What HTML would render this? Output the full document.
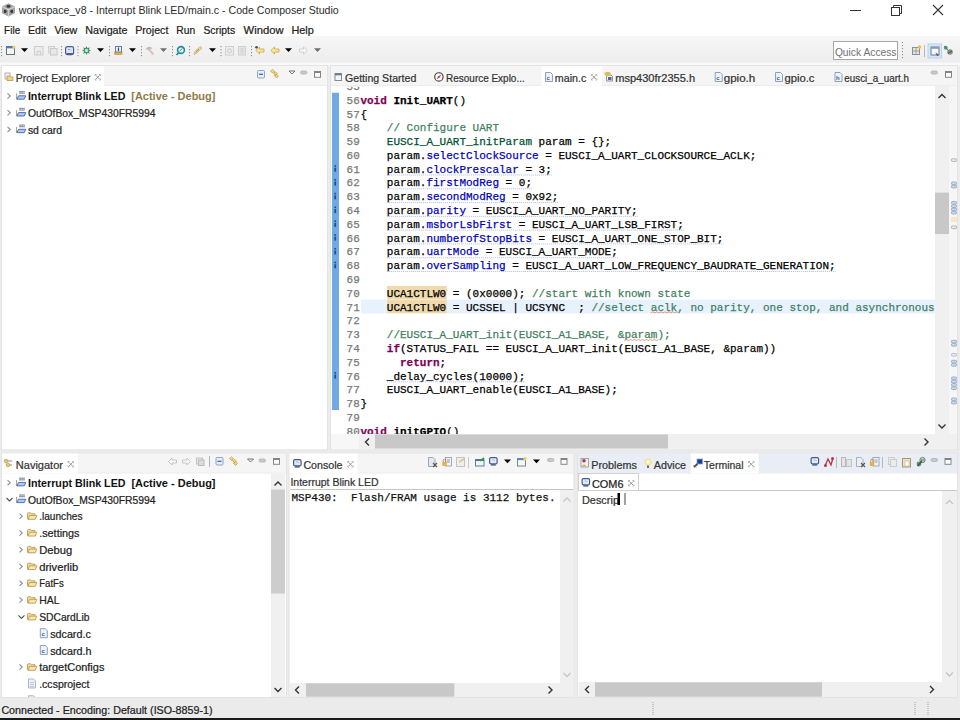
<!DOCTYPE html>
<html><head><meta charset="utf-8"><style>
html,body{margin:0;padding:0;width:960px;height:720px;overflow:hidden;background:#ebebeb}
svg{display:block}
text{white-space:pre}
</style></head><body>
<svg width="960" height="720" viewBox="0 0 960 720" font-family="Liberation Sans, sans-serif">
<rect x="0" y="0" width="960" height="720" fill="#ececec" />
<rect x="0" y="0" width="960" height="36" fill="#ffffff" />
<defs><linearGradient id="tb" x1="0" y1="0" x2="0" y2="1"><stop offset="0" stop-color="#f6f6f6"/><stop offset="1" stop-color="#ededed"/></linearGradient></defs>
<rect x="0" y="36" width="960" height="26" fill="url(#tb)" />
<rect x="0" y="62.5" width="960" height="3.5" fill="#f9f9f9" />
<g transform="translate(2,3)"><path d="M6.5 0.3 L13 3.5 L13 10.3 L6.5 13.6 L0 10.3 L0 3.5 Z" fill="#a4a4a4"/><path d="M0 3.5 L6.5 6.8 L13 3.5 M6.5 6.8 V13.6" fill="none" stroke="#d2d2d2" stroke-width="1.1"/><ellipse cx="6.5" cy="3.4" rx="2" ry="1.3" fill="#3a3a3a"/><ellipse cx="3.2" cy="8.4" rx="1.4" ry="1.8" fill="#3a3a3a"/><ellipse cx="9.8" cy="8.4" rx="1.4" ry="1.8" fill="#3a3a3a"/></g>
<text x="18.75" y="14" font-size="10.6" fill="#2b2b2b" textLength="320" lengthAdjust="spacingAndGlyphs" font-family='"Liberation Sans",sans-serif' >workspace_v8 - Interrupt Blink LED/main.c - Code Composer Studio</text>
<line x1="850" y1="10.5" x2="861" y2="10.5" stroke="#333" stroke-width="1" />
<rect x="891.5" y="7.5" width="8" height="8" fill="none" stroke="#333" stroke-width="1" />
<path d="M893.5 7.5 V5.5 H901.5 V13.5 H899.5" fill="none" stroke="#333" stroke-width="1"/>
<path d="M933 5 L943 15 M943 5 L933 15" stroke="#333" stroke-width="1.1"/>
<text x="4.1000000000000005" y="34.1" font-size="10.6" fill="#222" textLength="16.1" lengthAdjust="spacingAndGlyphs" font-family='"Liberation Sans",sans-serif'  stroke="#222" stroke-width="0.22">File</text>
<text x="28.099999999999998" y="34.1" font-size="10.6" fill="#222" textLength="18.1" lengthAdjust="spacingAndGlyphs" font-family='"Liberation Sans",sans-serif'  stroke="#222" stroke-width="0.22">Edit</text>
<text x="54.4" y="34.1" font-size="10.6" fill="#222" textLength="22.8" lengthAdjust="spacingAndGlyphs" font-family='"Liberation Sans",sans-serif'  stroke="#222" stroke-width="0.22">View</text>
<text x="85.2" y="34.1" font-size="10.6" fill="#222" textLength="42.300000000000004" lengthAdjust="spacingAndGlyphs" font-family='"Liberation Sans",sans-serif'  stroke="#222" stroke-width="0.22">Navigate</text>
<text x="135.20000000000002" y="34.1" font-size="10.6" fill="#222" textLength="33.2" lengthAdjust="spacingAndGlyphs" font-family='"Liberation Sans",sans-serif'  stroke="#222" stroke-width="0.22">Project</text>
<text x="176.3" y="34.1" font-size="10.6" fill="#222" textLength="18.8" lengthAdjust="spacingAndGlyphs" font-family='"Liberation Sans",sans-serif'  stroke="#222" stroke-width="0.22">Run</text>
<text x="203.4" y="34.1" font-size="10.6" fill="#222" textLength="31.700000000000003" lengthAdjust="spacingAndGlyphs" font-family='"Liberation Sans",sans-serif'  stroke="#222" stroke-width="0.22">Scripts</text>
<text x="243.6" y="34.1" font-size="10.6" fill="#222" textLength="40.0" lengthAdjust="spacingAndGlyphs" font-family='"Liberation Sans",sans-serif'  stroke="#222" stroke-width="0.22">Window</text>
<text x="291.4" y="34.1" font-size="10.6" fill="#222" textLength="22.400000000000002" lengthAdjust="spacingAndGlyphs" font-family='"Liberation Sans",sans-serif'  stroke="#222" stroke-width="0.22">Help</text>
<rect x="1" y="46" width="1" height="1.2" fill="#8a8a8a" />
<rect x="1" y="49" width="1" height="1.2" fill="#8a8a8a" />
<rect x="1" y="52" width="1" height="1.2" fill="#8a8a8a" />
<rect x="1" y="55" width="1" height="1.2" fill="#8a8a8a" />
<g transform="translate(6,46)"><rect x="0.5" y="0.5" width="8" height="8" fill="#f4f7ec" stroke="#6a7488"/><rect x="0.5" y="0.5" width="8" height="1.8" fill="#4f78b8"/><circle cx="8" cy="1" r="1.6" fill="#f0cf60"/></g>
<path d="M21 48.2 h7 l-3.5 3.8 z" fill="#000"/>
<g transform="translate(34,46)"><rect x="0.5" y="0.5" width="8.5" height="8.5" fill="#ececec" stroke="#cdcdcd"/><path d="M3 9 V5.5 H6.5 V9" fill="none" stroke="#cdcdcd"/></g>
<g transform="translate(48,46)"><rect x="0.5" y="0.5" width="6" height="6.5" fill="#ececec" stroke="#cfcfcf"/><rect x="2.5" y="2.5" width="6.5" height="6.5" fill="#e8e8e8" stroke="#c8c8c8"/></g>
<rect x="61" y="46" width="1" height="1.2" fill="#8a8a8a" />
<rect x="61" y="49" width="1" height="1.2" fill="#8a8a8a" />
<rect x="61" y="52" width="1" height="1.2" fill="#8a8a8a" />
<rect x="61" y="55" width="1" height="1.2" fill="#8a8a8a" />
<g transform="translate(65,46)"><rect x="0.6" y="0.6" width="8" height="8" rx="1.8" fill="#dce6f5" stroke="#4a5c9c" stroke-width="1.2"/><rect x="1.5" y="7" width="6.5" height="1.6" fill="#4a5c9c"/><path d="M3 3.5 H5 L6 4.5" stroke="#7a8ab8" stroke-width="0.7" fill="none"/></g>
<rect x="77.5" y="46" width="1" height="1.2" fill="#8a8a8a" />
<rect x="77.5" y="49" width="1" height="1.2" fill="#8a8a8a" />
<rect x="77.5" y="52" width="1" height="1.2" fill="#8a8a8a" />
<rect x="77.5" y="55" width="1" height="1.2" fill="#8a8a8a" />
<g transform="translate(82,46)"><path d="M4.5 0 L5.5 2.2 L7.8 1.2 L6.9 3.5 L9 4.5 L6.9 5.5 L7.8 7.8 L5.5 6.8 L4.5 9 L3.5 6.8 L1.2 7.8 L2.1 5.5 L0 4.5 L2.1 3.5 L1.2 1.2 L3.5 2.2 Z" fill="#3f8a66"/><circle cx="4.5" cy="4.5" r="1.8" fill="#b8e8cc"/></g>
<path d="M97 48.2 h7 l-3.5 3.8 z" fill="#000"/>
<rect x="109" y="46" width="1" height="1.2" fill="#8a8a8a" />
<rect x="109" y="49" width="1" height="1.2" fill="#8a8a8a" />
<rect x="109" y="52" width="1" height="1.2" fill="#8a8a8a" />
<rect x="109" y="55" width="1" height="1.2" fill="#8a8a8a" />
<g transform="translate(114,46)"><rect x="0" y="5.5" width="8.5" height="3.5" rx="1" fill="#e0a850"/><rect x="1.5" y="0.5" width="6" height="5.5" fill="#e4eef8" stroke="#6a7e9a"/><path d="M4.5 1.5 V5" stroke="#2a4a7e" stroke-width="1.1"/></g>
<path d="M129 48.2 h7 l-3.5 3.8 z" fill="#000"/>
<rect x="141" y="46" width="1" height="1.2" fill="#8a8a8a" />
<rect x="141" y="49" width="1" height="1.2" fill="#8a8a8a" />
<rect x="141" y="52" width="1" height="1.2" fill="#8a8a8a" />
<rect x="141" y="55" width="1" height="1.2" fill="#8a8a8a" />
<g transform="translate(145,46)"><path d="M0.5 3 Q3 0 6 1 L7 2.5 L4 4.5 Z" fill="#bdbdbd"/><path d="M4 3.5 L8.5 8.5" stroke="#d6cbbb" stroke-width="2.2"/></g>
<path d="M160 48.2 h7 l-3.5 3.8 z" fill="#6e6e6e"/>
<rect x="172" y="46" width="1" height="1.2" fill="#8a8a8a" />
<rect x="172" y="49" width="1" height="1.2" fill="#8a8a8a" />
<rect x="172" y="52" width="1" height="1.2" fill="#8a8a8a" />
<rect x="172" y="55" width="1" height="1.2" fill="#8a8a8a" />
<g transform="translate(176,46)"><circle cx="5" cy="4" r="3.4" fill="#e6f4f6" stroke="#1f8d9e" stroke-width="1.6"/><path d="M2.8 6.5 L0.5 9" stroke="#1f8d9e" stroke-width="1.8"/><path d="M3.5 5 L6.5 2.5" stroke="#1f8d9e" stroke-width="0.9"/></g>
<rect x="189" y="46" width="1" height="1.2" fill="#8a8a8a" />
<rect x="189" y="49" width="1" height="1.2" fill="#8a8a8a" />
<rect x="189" y="52" width="1" height="1.2" fill="#8a8a8a" />
<rect x="189" y="55" width="1" height="1.2" fill="#8a8a8a" />
<g transform="translate(193,46)"><path d="M1 8.5 L2 5.5 L7 0.5 L9 2 L4 7 Z" fill="#eed9a0" stroke="#c8a060" stroke-width="0.7"/><path d="M3 6 L6 3" stroke="#8a7a60" stroke-width="0.8"/></g>
<path d="M209 48.2 h7 l-3.5 3.8 z" fill="#000"/>
<rect x="220.5" y="46" width="1" height="1.2" fill="#8a8a8a" />
<rect x="220.5" y="49" width="1" height="1.2" fill="#8a8a8a" />
<rect x="220.5" y="52" width="1" height="1.2" fill="#8a8a8a" />
<rect x="220.5" y="55" width="1" height="1.2" fill="#8a8a8a" />
<g transform="translate(225,46)"><rect x="0.5" y="0.5" width="8" height="8.5" fill="#ededed" stroke="#d0d0d0"/><circle cx="4.5" cy="4.8" r="2" fill="none" stroke="#cacaca"/></g>
<g transform="translate(238,46)"><rect x="0.5" y="0.5" width="7" height="8.5" fill="#e4e4e4" stroke="#d0d0d0"/><rect x="2.5" y="2" width="3" height="5.5" fill="#d8d8d8"/></g>
<rect x="251" y="46" width="1" height="1.2" fill="#8a8a8a" />
<rect x="251" y="49" width="1" height="1.2" fill="#8a8a8a" />
<rect x="251" y="52" width="1" height="1.2" fill="#8a8a8a" />
<rect x="251" y="55" width="1" height="1.2" fill="#8a8a8a" />
<g transform="translate(255,46)"><path d="M0.8 4.5 L4.5 1 V3 H9 V6 H4.5 V8 Z" fill="#f7e7a0" stroke="#c9a640" stroke-width="0.8"/><circle cx="1.5" cy="1.2" r="1.3" fill="#3a4a78"/></g>
<g transform="translate(270,46)"><path d="M0.8 4.5 L4.5 1 V3 H9 V6 H4.5 V8 Z" fill="#f7e7a0" stroke="#c9a640" stroke-width="0.8"/></g>
<path d="M285 48.2 h7 l-3.5 3.8 z" fill="#000"/>
<g transform="translate(299,46)"><path d="M8.2 4.5 L4.5 1 V3 H0.5 V6 H4.5 V8 Z" fill="#f8f8f8" stroke="#c6c6c6" stroke-width="0.8"/></g>
<path d="M314 48.2 h7 l-3.5 3.8 z" fill="#6e6e6e"/>
<rect x="833.5" y="41.5" width="64" height="18" fill="#ffffff" stroke="#a8a8a8" stroke-width="1" />
<text x="834.9" y="55.6" font-size="10.6" fill="#707070" textLength="61.6" lengthAdjust="spacingAndGlyphs" font-family='"Liberation Sans",sans-serif' stroke="none">Quick Access</text>
<rect x="902" y="42" width="1" height="1.2" fill="#8a8a8a" />
<rect x="902" y="45" width="1" height="1.2" fill="#8a8a8a" />
<rect x="902" y="48" width="1" height="1.2" fill="#8a8a8a" />
<rect x="902" y="51" width="1" height="1.2" fill="#8a8a8a" />
<rect x="902" y="54" width="1" height="1.2" fill="#8a8a8a" />
<rect x="902" y="57" width="1" height="1.2" fill="#8a8a8a" />
<g transform="translate(912,45)"><rect x="0.5" y="2.5" width="7" height="7" fill="#f5e6b5" stroke="#7a92b8"/><path d="M0.5 6 H7.5 M4 2.5 V9.5" stroke="#7a92b8" stroke-width="0.8"/><circle cx="7.5" cy="2" r="1.8" fill="#f0c040"/></g>
<line x1="924.5" y1="45" x2="924.5" y2="57" stroke="#b8b8b8" stroke-width="1" />
<rect x="928" y="44" width="13.5" height="14" fill="#d5e7fa" stroke="#b5d3f3" stroke-width="1" />
<g transform="translate(930.5,46.5)"><rect x="0.5" y="0.5" width="8" height="8" fill="#f6f6f6" stroke="#6f7c90"/><rect x="0.5" y="0.5" width="8" height="1.8" fill="#8e9ab0"/><path d="M5 6 L8.5 8.5 L6.5 9.5 Z" fill="#555"/></g>
<g transform="translate(943,45)"><circle cx="2.8" cy="2.8" r="2" fill="#5aa06e"/><path d="M1 1 L5 5" stroke="#3a7a50" stroke-width="0.8"/><circle cx="7" cy="7" r="2.8" fill="#8a8a8a"/><path d="M5 8 L9 6" stroke="#555" stroke-width="1"/></g>
<rect x="2" y="66" width="325" height="383.5" fill="#ffffff" />
<rect x="2" y="66" width="325" height="20" fill="#f5f5f5" />
<line x1="2" y1="85.5" x2="327" y2="85.5" stroke="#ededed" stroke-width="1" />
<rect x="1.5" y="65.5" width="326" height="384.5" fill="none" stroke="#e3e3e3" stroke-width="1" />
<rect x="2" y="66" width="102" height="20" fill="#ffffff" />
<g transform="translate(4.5,72.5)"><rect x="0.5" y="0.5" width="5" height="6" fill="#f2f2f2" stroke="#a0a0a0" stroke-width="0.8"/><path d="M2.5 3.5 H5.5 L6.5 4.5 H8.5 V8 H2.5 Z" fill="#f0d48c" stroke="#c0984a" stroke-width="0.8"/></g>
<text x="15.65" y="82.1" font-size="10.6" fill="#333" textLength="74.6" lengthAdjust="spacingAndGlyphs" font-family='"Liberation Sans",sans-serif'  stroke="#333" stroke-width="0.22">Project Explorer</text>
<g transform="translate(94.5,74)" fill="none" stroke="#8c8c8c" stroke-width="0.9"><path d="M1.5 1.5 L5 5 M5 1.5 L1.5 5"/><path d="M0.5 2 V0.5 H2 M4.5 0.5 H6 V2 M6 4.5 V6 H4.5 M2 6 H0.5 V4.5" stroke="#a0a0a0" stroke-width="0.8"/></g>
<g transform="translate(257,70)"><rect x="0.5" y="0.5" width="7" height="7.5" rx="1" fill="#e6eef9" stroke="#8ea4c8"/><path d="M2 4.3 H6" stroke="#3f5f94" stroke-width="1.2"/></g>
<g transform="translate(269.5,69)"><path d="M1 2 L3 0.5 L5 2 L3 4 Z M4 4 L6 3 L8 4.5 L6 6.5 Z M5 6.5 L7 5.5 L9 7 L7 9 Z" fill="#f3d890" stroke="#c9a040" stroke-width="0.8"/></g>
<path d="M289 71 h6 l-3 3 z" fill="none" stroke="#666" stroke-width="0.9"/>
<rect x="300.5" y="71.0" width="6.5" height="3" fill="#c9c9c9" stroke="#b0b0b0" stroke-width="0.8" rx="1.5"/>
<rect x="314.5" y="71.5" width="6" height="5.8" fill="#fff" stroke="#858585" stroke-width="1" />
<rect x="314.5" y="71.5" width="6" height="1.5" fill="#858585" />
<path d="M7.5 93.39999999999999 l2.8 2.6 l-2.8 2.6" fill="none" stroke="#8e8e8e" stroke-width="1.1"/>
<g transform="translate(16,90.6)"><path d="M0.6 2.8 V8.5" stroke="#b39a70" stroke-width="1"/><path d="M3 0.3 h6 v3 h-6 z" fill="#d7dce6"/><path d="M3.4 1 h1.4 M5.4 1 h1.4 M7.4 1 h1.2 M3.4 2.6 h1.4 M5.4 2.6 h1.4 M7.4 2.6 h1.2" stroke="#5a6478" stroke-width="0.9"/><path d="M0.8 8.6 L2.6 5.2 H9.8 L8.2 8.6 Z" fill="#a9cdf6" stroke="#4862a8" stroke-width="0.9"/></g>
<path d="M7.5 110.2 l2.8 2.6 l-2.8 2.6" fill="none" stroke="#8e8e8e" stroke-width="1.1"/>
<g transform="translate(16,107.4)"><path d="M0.6 2.8 V8.5" stroke="#b39a70" stroke-width="1"/><path d="M3 0.3 h6 v3 h-6 z" fill="#d7dce6"/><path d="M3.4 1 h1.4 M5.4 1 h1.4 M7.4 1 h1.2 M3.4 2.6 h1.4 M5.4 2.6 h1.4 M7.4 2.6 h1.2" stroke="#5a6478" stroke-width="0.9"/><path d="M0.8 8.6 L2.6 5.2 H9.8 L8.2 8.6 Z" fill="#a9cdf6" stroke="#4862a8" stroke-width="0.9"/></g>
<path d="M7.5 126.89999999999999 l2.8 2.6 l-2.8 2.6" fill="none" stroke="#8e8e8e" stroke-width="1.1"/>
<g transform="translate(16,124.1)"><path d="M0.6 2.8 V8.5" stroke="#b39a70" stroke-width="1"/><path d="M3 0.3 h6 v3 h-6 z" fill="#d7dce6"/><path d="M3.4 1 h1.4 M5.4 1 h1.4 M7.4 1 h1.2 M3.4 2.6 h1.4 M5.4 2.6 h1.4 M7.4 2.6 h1.2" stroke="#5a6478" stroke-width="0.9"/><path d="M0.8 8.6 L2.6 5.2 H9.8 L8.2 8.6 Z" fill="#a9cdf6" stroke="#4862a8" stroke-width="0.9"/></g>
<text x="27.9" y="100.2" font-size="10.6" fill="#111" font-weight="bold" textLength="97.6" lengthAdjust="spacingAndGlyphs" font-family='"Liberation Sans",sans-serif' >Interrupt Blink LED</text>
<text x="131.3" y="100.2" font-size="10.6" fill="#8c7b48" font-weight="bold" textLength="84.1" lengthAdjust="spacingAndGlyphs" font-family='"Liberation Sans",sans-serif' >[Active - Debug]</text>
<text x="27.9" y="117.0" font-size="10.6" fill="#222" textLength="127.6" lengthAdjust="spacingAndGlyphs" font-family='"Liberation Sans",sans-serif'  stroke="#222" stroke-width="0.22">OutOfBox_MSP430FR5994</text>
<text x="27.9" y="133.7" font-size="10.6" fill="#222" textLength="34.1" lengthAdjust="spacingAndGlyphs" font-family='"Liberation Sans",sans-serif'  stroke="#222" stroke-width="0.22">sd card</text>
<rect x="331" y="66" width="626" height="383.5" fill="#ffffff" />
<rect x="331" y="66" width="626" height="20" fill="#f5f5f5" />
<line x1="331" y1="85.5" x2="957" y2="85.5" stroke="#ededed" stroke-width="1" />
<rect x="330.5" y="65.5" width="627" height="384.5" fill="none" stroke="#e3e3e3" stroke-width="1" />
<rect x="541.5" y="66" width="60.5" height="20" fill="#ffffff" />
<g transform="translate(334.5,73)"><rect x="0.5" y="0.5" width="6.5" height="7" fill="#eef6fb" stroke="#808a98"/><rect x="0.5" y="0.5" width="6.5" height="1.8" fill="#6a7a90"/></g>
<text x="345.0" y="82.3" font-size="10.6" fill="#333" textLength="71.3" lengthAdjust="spacingAndGlyphs" font-family='"Liberation Sans",sans-serif'  stroke="#333" stroke-width="0.22">Getting Started</text>
<g transform="translate(434,72)"><circle cx="4.9" cy="4.9" r="4.2" fill="#fff" stroke="#3a3a3a" stroke-width="1.1"/><path d="M2.4 7.4 L4.2 4.2 L7.4 2.4 L5.6 5.6 Z" fill="#b8405a"/></g>
<text x="446.09999999999997" y="82.3" font-size="10.6" fill="#333" textLength="78.6" lengthAdjust="spacingAndGlyphs" font-family='"Liberation Sans",sans-serif'  stroke="#333" stroke-width="0.22">Resource Explo...</text>
<g transform="translate(545,72)"><path d="M0.5 0.5 H5.5 L7.5 2.5 V9.5 H0.5 Z" fill="#eef3fa" stroke="#8aa0c0"/><text x="1.6" y="8" font-size="6" font-weight="bold" fill="#3a5f9c" font-family="Liberation Sans">c</text></g>
<text x="554.8" y="82.3" font-size="10.6" fill="#333" textLength="31.5" lengthAdjust="spacingAndGlyphs" font-family='"Liberation Sans",sans-serif'  stroke="#333" stroke-width="0.22">main.c</text>
<g transform="translate(590.8,74)" fill="none" stroke="#8c8c8c" stroke-width="0.9"><path d="M1.5 1.5 L5 5 M5 1.5 L1.5 5"/><path d="M0.5 2 V0.5 H2 M4.5 0.5 H6 V2 M6 4.5 V6 H4.5 M2 6 H0.5 V4.5" stroke="#a0a0a0" stroke-width="0.8"/></g>
<g transform="translate(604,72)"><path d="M2.5 3 H7 L8.5 4.5 V9 H2.5 Z" fill="#eef3fa" stroke="#8a8a80" stroke-width="0.9"/><path d="M0.3 2 Q0.3 0 2.5 0 H5.5 L7 2 L5 4 H2 Z" fill="#d8c050"/><rect x="4" y="5" width="3.5" height="3" fill="#5a6a98"/></g>
<text x="615.1999999999999" y="82.3" font-size="10.6" fill="#333" textLength="79.89999999999999" lengthAdjust="spacingAndGlyphs" font-family='"Liberation Sans",sans-serif'  stroke="#333" stroke-width="0.22">msp430fr2355.h</text>
<g transform="translate(714.7,72)"><path d="M0.5 0.5 H5.5 L7.5 2.5 V9.5 H0.5 Z" fill="#eef3fa" stroke="#8aa0c0"/><text x="1.6" y="8" font-size="6" font-weight="bold" fill="#3a5f9c" font-family="Liberation Sans">c</text></g>
<text x="723.6999999999999" y="82.3" font-size="10.6" fill="#333" textLength="31.6" lengthAdjust="spacingAndGlyphs" font-family='"Liberation Sans",sans-serif'  stroke="#333" stroke-width="0.22">gpio.h</text>
<g transform="translate(775,72)"><path d="M0.5 0.5 H5.5 L7.5 2.5 V9.5 H0.5 Z" fill="#eef3fa" stroke="#8aa0c0"/><text x="1.6" y="8" font-size="6" font-weight="bold" fill="#3a5f9c" font-family="Liberation Sans">c</text></g>
<text x="784.4" y="82.3" font-size="10.6" fill="#333" textLength="30.1" lengthAdjust="spacingAndGlyphs" font-family='"Liberation Sans",sans-serif'  stroke="#333" stroke-width="0.22">gpio.c</text>
<g transform="translate(834.5,72)"><path d="M0.5 0.5 H5.5 L7.5 2.5 V9.5 H0.5 Z" fill="#eef3fa" stroke="#8aa0c0"/><text x="1.6" y="8" font-size="6" font-weight="bold" fill="#3a5f9c" font-family="Liberation Sans">h</text></g>
<text x="844.3" y="82.3" font-size="10.6" fill="#333" textLength="64.6" lengthAdjust="spacingAndGlyphs" font-family='"Liberation Sans",sans-serif'  stroke="#333" stroke-width="0.22">eusci_a_uart.h</text>
<rect x="931.0" y="71.0" width="6.5" height="3" fill="#c9c9c9" stroke="#b0b0b0" stroke-width="0.8" rx="1.5"/>
<rect x="945.5" y="71.5" width="6" height="5.8" fill="#fff" stroke="#858585" stroke-width="1" />
<rect x="945.5" y="71.5" width="6" height="1.5" fill="#858585" />
<clipPath id="edclip"><rect x="331" y="86.8" width="604" height="347.2"/></clipPath>
<g clip-path="url(#edclip)">
<rect x="361" y="299.6" width="574" height="13.79" fill="#e8f2fe" />
<rect x="387" y="286.01" width="59.7" height="13.389999999999999" fill="#f0d9ab" />
<rect x="387" y="299.8" width="59.7" height="13.389999999999999" fill="#f0d9ab" />
<rect x="332" y="92.75" width="7" height="317.25" fill="#70aae2" />
<rect x="334.3" y="165.20" width="1.8" height="1.6" fill="#1f4f9a"/><rect x="334.3" y="167.70" width="1.8" height="4" fill="#1f4f9a"/>
<rect x="334.3" y="178.99" width="1.8" height="1.6" fill="#1f4f9a"/><rect x="334.3" y="181.49" width="1.8" height="4" fill="#1f4f9a"/>
<rect x="334.3" y="192.78" width="1.8" height="1.6" fill="#1f4f9a"/><rect x="334.3" y="195.28" width="1.8" height="4" fill="#1f4f9a"/>
<rect x="334.3" y="206.57" width="1.8" height="1.6" fill="#1f4f9a"/><rect x="334.3" y="209.07" width="1.8" height="4" fill="#1f4f9a"/>
<rect x="334.3" y="220.36" width="1.8" height="1.6" fill="#1f4f9a"/><rect x="334.3" y="222.86" width="1.8" height="4" fill="#1f4f9a"/>
<rect x="334.3" y="234.15" width="1.8" height="1.6" fill="#1f4f9a"/><rect x="334.3" y="236.65" width="1.8" height="4" fill="#1f4f9a"/>
<rect x="334.3" y="247.94" width="1.8" height="1.6" fill="#1f4f9a"/><rect x="334.3" y="250.44" width="1.8" height="4" fill="#1f4f9a"/>
<rect x="334.3" y="261.73" width="1.8" height="1.6" fill="#1f4f9a"/><rect x="334.3" y="264.23" width="1.8" height="4" fill="#1f4f9a"/>
<rect x="334.3" y="372.05" width="1.8" height="1.6" fill="#1f4f9a"/><rect x="334.3" y="374.55" width="1.8" height="4" fill="#1f4f9a"/>
<text x="346.6" y="89.96" font-size="11.7" fill="#787878" textLength="13.2" lengthAdjust="spacingAndGlyphs" font-family='"Liberation Mono",monospace' stroke="#787878" stroke-width="0.25">55</text>
<text x="346.6" y="103.75" font-size="11.7" fill="#787878" textLength="13.2" lengthAdjust="spacingAndGlyphs" font-family='"Liberation Mono",monospace' stroke="#787878" stroke-width="0.25">56</text>
<text x="360.4" y="103.75" font-size="11.7" fill="#7f0055" font-weight="bold" textLength="26.4" lengthAdjust="spacingAndGlyphs" font-family='"Liberation Mono",monospace' stroke="#7f0055" stroke-width="0.25">void</text>
<text x="393.4" y="103.75" font-size="11.7" fill="#000000" font-weight="bold" textLength="59.4" lengthAdjust="spacingAndGlyphs" font-family='"Liberation Mono",monospace' stroke="#000000" stroke-width="0.25">Init_UART</text>
<text x="452.8" y="103.75" font-size="11.7" fill="#000000" textLength="13.2" lengthAdjust="spacingAndGlyphs" font-family='"Liberation Mono",monospace' stroke="#000000" stroke-width="0.25">()</text>
<text x="346.6" y="117.54" font-size="11.7" fill="#787878" textLength="13.2" lengthAdjust="spacingAndGlyphs" font-family='"Liberation Mono",monospace' stroke="#787878" stroke-width="0.25">57</text>
<text x="360.4" y="117.54" font-size="11.7" fill="#000000" textLength="6.6" lengthAdjust="spacingAndGlyphs" font-family='"Liberation Mono",monospace' stroke="#000000" stroke-width="0.25">{</text>
<text x="346.6" y="131.33" font-size="11.7" fill="#787878" textLength="13.2" lengthAdjust="spacingAndGlyphs" font-family='"Liberation Mono",monospace' stroke="#787878" stroke-width="0.25">58</text>
<text x="386.8" y="131.33" font-size="11.7" fill="#3f7f5f" textLength="112.2" lengthAdjust="spacingAndGlyphs" font-family='"Liberation Mono",monospace' stroke="#3f7f5f" stroke-width="0.25">// Configure UART</text>
<text x="346.6" y="145.12" font-size="11.7" fill="#787878" textLength="13.2" lengthAdjust="spacingAndGlyphs" font-family='"Liberation Mono",monospace' stroke="#787878" stroke-width="0.25">59</text>
<text x="386.8" y="145.12" font-size="11.7" fill="#005032" textLength="145.2" lengthAdjust="spacingAndGlyphs" font-family='"Liberation Mono",monospace' stroke="#005032" stroke-width="0.25">EUSCI_A_UART_initParam</text>
<text x="538.6" y="145.12" font-size="11.7" fill="#000000" textLength="72.6" lengthAdjust="spacingAndGlyphs" font-family='"Liberation Mono",monospace' stroke="#000000" stroke-width="0.25">param = {};</text>
<text x="346.6" y="158.91" font-size="11.7" fill="#787878" textLength="13.2" lengthAdjust="spacingAndGlyphs" font-family='"Liberation Mono",monospace' stroke="#787878" stroke-width="0.25">60</text>
<text x="386.8" y="158.91" font-size="11.7" fill="#000000" textLength="39.6" lengthAdjust="spacingAndGlyphs" font-family='"Liberation Mono",monospace' stroke="#000000" stroke-width="0.25">param.</text>
<text x="426.4" y="158.91" font-size="11.7" fill="#0000c0" textLength="112.2" lengthAdjust="spacingAndGlyphs" font-family='"Liberation Mono",monospace' stroke="#0000c0" stroke-width="0.25">selectClockSource</text>
<text x="545.2" y="158.91" font-size="11.7" fill="#000000" textLength="211.2" lengthAdjust="spacingAndGlyphs" font-family='"Liberation Mono",monospace' stroke="#000000" stroke-width="0.25">= EUSCI_A_UART_CLOCKSOURCE_ACLK;</text>
<text x="346.6" y="172.7" font-size="11.7" fill="#787878" textLength="13.2" lengthAdjust="spacingAndGlyphs" font-family='"Liberation Mono",monospace' stroke="#787878" stroke-width="0.25">61</text>
<text x="386.8" y="172.7" font-size="11.7" fill="#000000" textLength="39.6" lengthAdjust="spacingAndGlyphs" font-family='"Liberation Mono",monospace' stroke="#000000" stroke-width="0.25">param.</text>
<text x="426.4" y="172.7" font-size="11.7" fill="#0000c0" textLength="92.4" lengthAdjust="spacingAndGlyphs" font-family='"Liberation Mono",monospace' stroke="#0000c0" stroke-width="0.25">clockPrescalar</text>
<text x="525.4" y="172.7" font-size="11.7" fill="#000000" textLength="26.4" lengthAdjust="spacingAndGlyphs" font-family='"Liberation Mono",monospace' stroke="#000000" stroke-width="0.25">= 3;</text>
<text x="346.6" y="186.49" font-size="11.7" fill="#787878" textLength="13.2" lengthAdjust="spacingAndGlyphs" font-family='"Liberation Mono",monospace' stroke="#787878" stroke-width="0.25">62</text>
<text x="386.8" y="186.49" font-size="11.7" fill="#000000" textLength="39.6" lengthAdjust="spacingAndGlyphs" font-family='"Liberation Mono",monospace' stroke="#000000" stroke-width="0.25">param.</text>
<text x="426.4" y="186.49" font-size="11.7" fill="#0000c0" textLength="72.6" lengthAdjust="spacingAndGlyphs" font-family='"Liberation Mono",monospace' stroke="#0000c0" stroke-width="0.25">firstModReg</text>
<text x="505.6" y="186.49" font-size="11.7" fill="#000000" textLength="26.4" lengthAdjust="spacingAndGlyphs" font-family='"Liberation Mono",monospace' stroke="#000000" stroke-width="0.25">= 0;</text>
<text x="346.6" y="200.28" font-size="11.7" fill="#787878" textLength="13.2" lengthAdjust="spacingAndGlyphs" font-family='"Liberation Mono",monospace' stroke="#787878" stroke-width="0.25">63</text>
<text x="386.8" y="200.28" font-size="11.7" fill="#000000" textLength="39.6" lengthAdjust="spacingAndGlyphs" font-family='"Liberation Mono",monospace' stroke="#000000" stroke-width="0.25">param.</text>
<text x="426.4" y="200.28" font-size="11.7" fill="#0000c0" textLength="79.2" lengthAdjust="spacingAndGlyphs" font-family='"Liberation Mono",monospace' stroke="#0000c0" stroke-width="0.25">secondModReg</text>
<text x="512.2" y="200.28" font-size="11.7" fill="#000000" textLength="46.2" lengthAdjust="spacingAndGlyphs" font-family='"Liberation Mono",monospace' stroke="#000000" stroke-width="0.25">= 0x92;</text>
<text x="346.6" y="214.07" font-size="11.7" fill="#787878" textLength="13.2" lengthAdjust="spacingAndGlyphs" font-family='"Liberation Mono",monospace' stroke="#787878" stroke-width="0.25">64</text>
<text x="386.8" y="214.07" font-size="11.7" fill="#000000" textLength="39.6" lengthAdjust="spacingAndGlyphs" font-family='"Liberation Mono",monospace' stroke="#000000" stroke-width="0.25">param.</text>
<text x="426.4" y="214.07" font-size="11.7" fill="#0000c0" textLength="39.6" lengthAdjust="spacingAndGlyphs" font-family='"Liberation Mono",monospace' stroke="#0000c0" stroke-width="0.25">parity</text>
<text x="472.6" y="214.07" font-size="11.7" fill="#000000" textLength="165.0" lengthAdjust="spacingAndGlyphs" font-family='"Liberation Mono",monospace' stroke="#000000" stroke-width="0.25">= EUSCI_A_UART_NO_PARITY;</text>
<text x="346.6" y="227.86" font-size="11.7" fill="#787878" textLength="13.2" lengthAdjust="spacingAndGlyphs" font-family='"Liberation Mono",monospace' stroke="#787878" stroke-width="0.25">65</text>
<text x="386.8" y="227.86" font-size="11.7" fill="#000000" textLength="39.6" lengthAdjust="spacingAndGlyphs" font-family='"Liberation Mono",monospace' stroke="#000000" stroke-width="0.25">param.</text>
<text x="426.4" y="227.86" font-size="11.7" fill="#0000c0" textLength="85.8" lengthAdjust="spacingAndGlyphs" font-family='"Liberation Mono",monospace' stroke="#0000c0" stroke-width="0.25">msborLsbFirst</text>
<text x="518.8" y="227.86" font-size="11.7" fill="#000000" textLength="165.0" lengthAdjust="spacingAndGlyphs" font-family='"Liberation Mono",monospace' stroke="#000000" stroke-width="0.25">= EUSCI_A_UART_LSB_FIRST;</text>
<text x="346.6" y="241.65" font-size="11.7" fill="#787878" textLength="13.2" lengthAdjust="spacingAndGlyphs" font-family='"Liberation Mono",monospace' stroke="#787878" stroke-width="0.25">66</text>
<text x="386.8" y="241.65" font-size="11.7" fill="#000000" textLength="39.6" lengthAdjust="spacingAndGlyphs" font-family='"Liberation Mono",monospace' stroke="#000000" stroke-width="0.25">param.</text>
<text x="426.4" y="241.65" font-size="11.7" fill="#0000c0" textLength="105.6" lengthAdjust="spacingAndGlyphs" font-family='"Liberation Mono",monospace' stroke="#0000c0" stroke-width="0.25">numberofStopBits</text>
<text x="538.6" y="241.65" font-size="11.7" fill="#000000" textLength="184.8" lengthAdjust="spacingAndGlyphs" font-family='"Liberation Mono",monospace' stroke="#000000" stroke-width="0.25">= EUSCI_A_UART_ONE_STOP_BIT;</text>
<text x="346.6" y="255.44" font-size="11.7" fill="#787878" textLength="13.2" lengthAdjust="spacingAndGlyphs" font-family='"Liberation Mono",monospace' stroke="#787878" stroke-width="0.25">67</text>
<text x="386.8" y="255.44" font-size="11.7" fill="#000000" textLength="39.6" lengthAdjust="spacingAndGlyphs" font-family='"Liberation Mono",monospace' stroke="#000000" stroke-width="0.25">param.</text>
<text x="426.4" y="255.44" font-size="11.7" fill="#0000c0" textLength="52.8" lengthAdjust="spacingAndGlyphs" font-family='"Liberation Mono",monospace' stroke="#0000c0" stroke-width="0.25">uartMode</text>
<text x="485.8" y="255.44" font-size="11.7" fill="#000000" textLength="132.0" lengthAdjust="spacingAndGlyphs" font-family='"Liberation Mono",monospace' stroke="#000000" stroke-width="0.25">= EUSCI_A_UART_MODE;</text>
<text x="346.6" y="269.23" font-size="11.7" fill="#787878" textLength="13.2" lengthAdjust="spacingAndGlyphs" font-family='"Liberation Mono",monospace' stroke="#787878" stroke-width="0.25">68</text>
<text x="386.8" y="269.23" font-size="11.7" fill="#000000" textLength="39.6" lengthAdjust="spacingAndGlyphs" font-family='"Liberation Mono",monospace' stroke="#000000" stroke-width="0.25">param.</text>
<text x="426.4" y="269.23" font-size="11.7" fill="#0000c0" textLength="79.2" lengthAdjust="spacingAndGlyphs" font-family='"Liberation Mono",monospace' stroke="#0000c0" stroke-width="0.25">overSampling</text>
<text x="512.2" y="269.23" font-size="11.7" fill="#000000" textLength="323.4" lengthAdjust="spacingAndGlyphs" font-family='"Liberation Mono",monospace' stroke="#000000" stroke-width="0.25">= EUSCI_A_UART_LOW_FREQUENCY_BAUDRATE_GENERATION;</text>
<text x="346.6" y="283.02" font-size="11.7" fill="#787878" textLength="13.2" lengthAdjust="spacingAndGlyphs" font-family='"Liberation Mono",monospace' stroke="#787878" stroke-width="0.25">69</text>
<text x="346.6" y="296.81" font-size="11.7" fill="#787878" textLength="13.2" lengthAdjust="spacingAndGlyphs" font-family='"Liberation Mono",monospace' stroke="#787878" stroke-width="0.25">70</text>
<text x="386.8" y="296.81" font-size="11.7" fill="#000000" textLength="145.2" lengthAdjust="spacingAndGlyphs" font-family='"Liberation Mono",monospace' stroke="#000000" stroke-width="0.25">UCA1CTLW0 = (0x0000); </text>
<text x="532.0" y="296.81" font-size="11.7" fill="#3f7f5f" textLength="158.4" lengthAdjust="spacingAndGlyphs" font-family='"Liberation Mono",monospace' stroke="#3f7f5f" stroke-width="0.25">//start with known state</text>
<text x="346.6" y="310.6" font-size="11.7" fill="#787878" textLength="13.2" lengthAdjust="spacingAndGlyphs" font-family='"Liberation Mono",monospace' stroke="#787878" stroke-width="0.25">71</text>
<text x="386.8" y="310.6" font-size="11.7" fill="#000000" textLength="204.6" lengthAdjust="spacingAndGlyphs" font-family='"Liberation Mono",monospace' stroke="#000000" stroke-width="0.25">UCA1CTLW0 = UCSSEL | UCSYNC  ; </text>
<text x="591.4" y="310.6" font-size="11.7" fill="#3f7f5f" textLength="343.2" lengthAdjust="spacingAndGlyphs" font-family='"Liberation Mono",monospace' stroke="#3f7f5f" stroke-width="0.25">//select aclk, no parity, one stop, and asynchronous</text>
<text x="346.6" y="324.39" font-size="11.7" fill="#787878" textLength="13.2" lengthAdjust="spacingAndGlyphs" font-family='"Liberation Mono",monospace' stroke="#787878" stroke-width="0.25">72</text>
<text x="346.6" y="338.18" font-size="11.7" fill="#787878" textLength="13.2" lengthAdjust="spacingAndGlyphs" font-family='"Liberation Mono",monospace' stroke="#787878" stroke-width="0.25">73</text>
<text x="386.8" y="338.18" font-size="11.7" fill="#3f7f5f" textLength="283.8" lengthAdjust="spacingAndGlyphs" font-family='"Liberation Mono",monospace' stroke="#3f7f5f" stroke-width="0.25">//EUSCI_A_UART_init(EUSCI_A1_BASE, &amp;param);</text>
<text x="346.6" y="351.97" font-size="11.7" fill="#787878" textLength="13.2" lengthAdjust="spacingAndGlyphs" font-family='"Liberation Mono",monospace' stroke="#787878" stroke-width="0.25">74</text>
<text x="386.8" y="351.97" font-size="11.7" fill="#7f0055" font-weight="bold" textLength="13.2" lengthAdjust="spacingAndGlyphs" font-family='"Liberation Mono",monospace' stroke="#7f0055" stroke-width="0.25">if</text>
<text x="400.0" y="351.97" font-size="11.7" fill="#000000" textLength="376.2" lengthAdjust="spacingAndGlyphs" font-family='"Liberation Mono",monospace' stroke="#000000" stroke-width="0.25">(STATUS_FAIL == EUSCI_A_UART_init(EUSCI_A1_BASE, &amp;param))</text>
<text x="346.6" y="365.76" font-size="11.7" fill="#787878" textLength="13.2" lengthAdjust="spacingAndGlyphs" font-family='"Liberation Mono",monospace' stroke="#787878" stroke-width="0.25">75</text>
<text x="400.0" y="365.76" font-size="11.7" fill="#7f0055" font-weight="bold" textLength="39.6" lengthAdjust="spacingAndGlyphs" font-family='"Liberation Mono",monospace' stroke="#7f0055" stroke-width="0.25">return</text>
<text x="439.6" y="365.76" font-size="11.7" fill="#000000" textLength="6.6" lengthAdjust="spacingAndGlyphs" font-family='"Liberation Mono",monospace' stroke="#000000" stroke-width="0.25">;</text>
<text x="346.6" y="379.55" font-size="11.7" fill="#787878" textLength="13.2" lengthAdjust="spacingAndGlyphs" font-family='"Liberation Mono",monospace' stroke="#787878" stroke-width="0.25">76</text>
<text x="386.8" y="379.55" font-size="11.7" fill="#000000" textLength="138.6" lengthAdjust="spacingAndGlyphs" font-family='"Liberation Mono",monospace' stroke="#000000" stroke-width="0.25">_delay_cycles(10000);</text>
<text x="346.6" y="393.34" font-size="11.7" fill="#787878" textLength="13.2" lengthAdjust="spacingAndGlyphs" font-family='"Liberation Mono",monospace' stroke="#787878" stroke-width="0.25">77</text>
<text x="386.8" y="393.34" font-size="11.7" fill="#000000" textLength="231.0" lengthAdjust="spacingAndGlyphs" font-family='"Liberation Mono",monospace' stroke="#000000" stroke-width="0.25">EUSCI_A_UART_enable(EUSCI_A1_BASE);</text>
<text x="346.6" y="407.13" font-size="11.7" fill="#787878" textLength="13.2" lengthAdjust="spacingAndGlyphs" font-family='"Liberation Mono",monospace' stroke="#787878" stroke-width="0.25">78</text>
<text x="360.4" y="407.13" font-size="11.7" fill="#000000" textLength="6.6" lengthAdjust="spacingAndGlyphs" font-family='"Liberation Mono",monospace' stroke="#000000" stroke-width="0.25">}</text>
<text x="346.6" y="420.92" font-size="11.7" fill="#787878" textLength="13.2" lengthAdjust="spacingAndGlyphs" font-family='"Liberation Mono",monospace' stroke="#787878" stroke-width="0.25">79</text>
<text x="346.6" y="434.71" font-size="11.7" fill="#787878" textLength="13.2" lengthAdjust="spacingAndGlyphs" font-family='"Liberation Mono",monospace' stroke="#787878" stroke-width="0.25">80</text>
<text x="360.4" y="434.71" font-size="11.7" fill="#7f0055" font-weight="bold" textLength="26.4" lengthAdjust="spacingAndGlyphs" font-family='"Liberation Mono",monospace' stroke="#7f0055" stroke-width="0.25">void</text>
<text x="393.4" y="434.71" font-size="11.7" fill="#000000" font-weight="bold" textLength="52.8" lengthAdjust="spacingAndGlyphs" font-family='"Liberation Mono",monospace' stroke="#000000" stroke-width="0.25">initGPIO</text>
<text x="446.2" y="434.71" font-size="11.7" fill="#000000" textLength="13.2" lengthAdjust="spacingAndGlyphs" font-family='"Liberation Mono",monospace' stroke="#000000" stroke-width="0.25">()</text>
<line x1="386.80" y1="175.00" x2="551.80" y2="175.00" stroke="#7d95cf" stroke-width="0.9" stroke-dasharray="1 1" opacity="0.7"/>
<line x1="386.80" y1="188.79" x2="532.00" y2="188.79" stroke="#7d95cf" stroke-width="0.9" stroke-dasharray="1 1" opacity="0.7"/>
<line x1="386.80" y1="202.58" x2="558.40" y2="202.58" stroke="#7d95cf" stroke-width="0.9" stroke-dasharray="1 1" opacity="0.7"/>
<line x1="386.80" y1="216.37" x2="637.60" y2="216.37" stroke="#7d95cf" stroke-width="0.9" stroke-dasharray="1 1" opacity="0.7"/>
<line x1="386.80" y1="230.16" x2="683.80" y2="230.16" stroke="#7d95cf" stroke-width="0.9" stroke-dasharray="1 1" opacity="0.7"/>
<line x1="386.80" y1="243.95" x2="723.40" y2="243.95" stroke="#7d95cf" stroke-width="0.9" stroke-dasharray="1 1" opacity="0.7"/>
<line x1="386.80" y1="257.74" x2="617.80" y2="257.74" stroke="#7d95cf" stroke-width="0.9" stroke-dasharray="1 1" opacity="0.7"/>
<line x1="386.80" y1="271.53" x2="835.60" y2="271.53" stroke="#7d95cf" stroke-width="0.9" stroke-dasharray="1 1" opacity="0.7"/>
<line x1="386.80" y1="381.85" x2="525.40" y2="381.85" stroke="#7d95cf" stroke-width="0.9" stroke-dasharray="1 1" opacity="0.7"/>
<path d="M650.80 312.90 L652.80 311.90 L654.80 312.90 L656.80 311.90 L658.80 312.90 L660.80 311.90 L662.80 312.90 L664.80 311.90 L666.80 312.90 L668.80 311.90 L670.80 312.90 L672.80 311.90 L674.80 312.90 L676.80 311.90 L678.80 312.90" fill="none" stroke="#e06040" stroke-width="0.8" opacity="0.8"/>
<path d="M624.40 340.48 L626.40 339.48 L628.40 340.48 L630.40 339.48 L632.40 340.48 L634.40 339.48 L636.40 340.48 L638.40 339.48 L640.40 340.48 L642.40 339.48 L644.40 340.48 L646.40 339.48 L648.40 340.48 L650.40 339.48 L652.40 340.48 L654.40 339.48 L656.40 340.48 L658.40 339.48" fill="none" stroke="#e06040" stroke-width="0.8" opacity="0.8"/>
</g>
<rect x="935" y="86" width="14" height="348" fill="#f0f0f0" />
<path d="M938.5 98 L942 94.5 L945.5 98" fill="none" stroke="#333" stroke-width="1.4"/>
<rect x="935" y="192.6" width="14" height="41.4" fill="#c8c8c8" />
<path d="M938.5 424.5 L942 428 L945.5 424.5" fill="none" stroke="#333" stroke-width="1.4"/>
<rect x="949" y="86" width="8" height="348" fill="#f6f6f6" />
<rect x="951.5" y="158.8" width="5" height="2.6" fill="#f0f0f0" stroke="#a0a0a0" stroke-width="0.8" rx="0.8"/>
<rect x="951.5" y="182.0" width="5" height="2.6" fill="#c9d8ee" stroke="#8fa3c4" stroke-width="0.8" rx="0.8"/>
<rect x="951.5" y="185.3" width="5" height="2.6" fill="#c9d8ee" stroke="#8fa3c4" stroke-width="0.8" rx="0.8"/>
<rect x="951.5" y="201.5" width="5" height="2.6" fill="#c9d8ee" stroke="#8fa3c4" stroke-width="0.8" rx="0.8"/>
<rect x="951.5" y="204.8" width="5" height="2.6" fill="#c9d8ee" stroke="#8fa3c4" stroke-width="0.8" rx="0.8"/>
<rect x="951.5" y="208.1" width="5" height="2.6" fill="#c9d8ee" stroke="#8fa3c4" stroke-width="0.8" rx="0.8"/>
<rect x="951.5" y="211.4" width="5" height="2.6" fill="#c9d8ee" stroke="#8fa3c4" stroke-width="0.8" rx="0.8"/>
<rect x="951" y="217" width="6" height="5" fill="#f6e8c0" />
<rect x="951.5" y="226.0" width="5" height="2.6" fill="#f0f0f0" stroke="#a0a0a0" stroke-width="0.8" rx="0.8"/>
<rect x="951.5" y="340.3" width="5" height="2.6" fill="#c9d8ee" stroke="#8fa3c4" stroke-width="0.8" rx="0.8"/>
<rect x="951.5" y="343.6" width="5" height="2.6" fill="#c9d8ee" stroke="#8fa3c4" stroke-width="0.8" rx="0.8"/>
<rect x="951.5" y="353.5" width="5" height="2.6" fill="#eaeaea" stroke="#a8b4c8" stroke-width="0.8" rx="0.8"/>
<rect x="951.5" y="360.3" width="5" height="2.6" fill="#c9d8ee" stroke="#8fa3c4" stroke-width="0.8" rx="0.8"/>
<rect x="951.5" y="363.6" width="5" height="2.6" fill="#c9d8ee" stroke="#8fa3c4" stroke-width="0.8" rx="0.8"/>
<rect x="951.5" y="377.0" width="5" height="2.6" fill="#c9d8ee" stroke="#8fa3c4" stroke-width="0.8" rx="0.8"/>
<rect x="951.5" y="380.3" width="5" height="2.6" fill="#c9d8ee" stroke="#8fa3c4" stroke-width="0.8" rx="0.8"/>
<rect x="951.5" y="383.6" width="5" height="2.6" fill="#c9d8ee" stroke="#8fa3c4" stroke-width="0.8" rx="0.8"/>
<rect x="951.5" y="386.9" width="5" height="2.6" fill="#c9d8ee" stroke="#8fa3c4" stroke-width="0.8" rx="0.8"/>
<rect x="951.5" y="398.0" width="5" height="2.6" fill="#c9d8ee" stroke="#8fa3c4" stroke-width="0.8" rx="0.8"/>
<rect x="951.5" y="401.3" width="5" height="2.6" fill="#c9d8ee" stroke="#8fa3c4" stroke-width="0.8" rx="0.8"/>
<rect x="331" y="434" width="604" height="15" fill="#f7f7f7" />
<rect x="359" y="434" width="576" height="15" fill="#f0f0f0" />
<path d="M369 438.5 L365.5 442 L369 445.5" fill="none" stroke="#333" stroke-width="1.4"/>
<rect x="375" y="434.5" width="293" height="14" fill="#c8c8c8" />
<path d="M924.5 438.5 L928 442 L924.5 445.5" fill="none" stroke="#333" stroke-width="1.4"/>
<rect x="935" y="434" width="22" height="15" fill="#f0f0f0" />
<rect x="2" y="453.5" width="284" height="243.5" fill="#ffffff" />
<rect x="2" y="453.5" width="284" height="20" fill="#f5f5f5" />
<line x1="2" y1="473.0" x2="286" y2="473.0" stroke="#ededed" stroke-width="1" />
<rect x="1.5" y="453.0" width="285" height="244.5" fill="none" stroke="#e3e3e3" stroke-width="1" />
<rect x="2" y="453.5" width="76" height="20" fill="#ffffff" />
<g transform="translate(4,459)"><circle cx="2" cy="2" r="1.8" fill="#e8c76a" stroke="#b08a30" stroke-width="0.6"/><circle cx="4" cy="6" r="1.8" fill="#e8c76a" stroke="#b08a30" stroke-width="0.6"/><path d="M4 2 H8 M6 6 H8" stroke="#7a8aa8" stroke-width="1"/></g>
<text x="15.799999999999999" y="469.0" font-size="10.6" fill="#333" textLength="47.2" lengthAdjust="spacingAndGlyphs" font-family='"Liberation Sans",sans-serif'  stroke="#333" stroke-width="0.22">Navigator</text>
<g transform="translate(67.5,461)" fill="none" stroke="#8c8c8c" stroke-width="0.9"><path d="M1.5 1.5 L5 5 M5 1.5 L1.5 5"/><path d="M0.5 2 V0.5 H2 M4.5 0.5 H6 V2 M6 4.5 V6 H4.5 M2 6 H0.5 V4.5" stroke="#a0a0a0" stroke-width="0.8"/></g>
<g transform="translate(168,457.5)"><path d="M0.5 4 L4 0.5 V2.5 H8.5 V5.5 H4 V7.5 Z" fill="#f8f8f8" stroke="#c2c2c2" stroke-width="0.9"/></g>
<g transform="translate(182,457.5)"><path d="M8.5 4 L5 0.5 V2.5 H0.5 V5.5 H5 V7.5 Z" fill="#f8f8f8" stroke="#c2c2c2" stroke-width="0.9"/></g>
<g transform="translate(196,457.5)"><rect x="0.5" y="0.5" width="6" height="6" fill="#e6e6e6" stroke="#c4c4c4"/><rect x="2.5" y="2.5" width="5.5" height="5.5" fill="#dcdcdc" stroke="#bcbcbc"/></g>
<line x1="209.5" y1="456" x2="209.5" y2="467" stroke="#b4b4b4" stroke-width="1" />
<g transform="translate(215.5,457)"><rect x="0.5" y="0.5" width="7" height="7.5" rx="1" fill="#e6eef9" stroke="#8ea4c8"/><path d="M2 4.3 H6" stroke="#3f5f94" stroke-width="1.2"/></g>
<g transform="translate(228.5,456.5)"><path d="M1 2 L3 0.5 L5 2 L3 4 Z M4 4 L6 3 L8 4.5 L6 6.5 Z M5 6.5 L7 5.5 L9 7 L7 9 Z" fill="#f3d890" stroke="#c9a040" stroke-width="0.8"/></g>
<path d="M247.5 459 h6 l-3 3 z" fill="none" stroke="#666" stroke-width="0.9"/>
<rect x="259.0" y="459.0" width="6.5" height="3" fill="#c9c9c9" stroke="#b0b0b0" stroke-width="0.8" rx="1.5"/>
<rect x="273.5" y="458.5" width="6" height="5.8" fill="#fff" stroke="#858585" stroke-width="1" />
<rect x="273.5" y="458.5" width="6" height="1.5" fill="#858585" />
<rect x="271" y="474" width="14" height="223" fill="#f0f0f0" />
<path d="M274.5 485.5 L278 482 L281.5 485.5" fill="none" stroke="#333" stroke-width="1.4"/>
<rect x="271" y="489.5" width="14" height="104" fill="#cdcdcd" />
<path d="M274.5 688 L278 691.5 L281.5 688" fill="none" stroke="#333" stroke-width="1.4"/>
<clipPath id="navclip"><rect x="2" y="474" width="269" height="223"/></clipPath><g clip-path="url(#navclip)">
<path d="M7.5 480.05 l2.8 2.6 l-2.8 2.6" fill="none" stroke="#8e8e8e" stroke-width="1.1"/>
<g transform="translate(16,477.25)"><path d="M0.6 2.8 V8.5" stroke="#b39a70" stroke-width="1"/><path d="M3 0.3 h6 v3 h-6 z" fill="#d7dce6"/><path d="M3.4 1 h1.4 M5.4 1 h1.4 M7.4 1 h1.2 M3.4 2.6 h1.4 M5.4 2.6 h1.4 M7.4 2.6 h1.2" stroke="#5a6478" stroke-width="0.9"/><path d="M0.8 8.6 L2.6 5.2 H9.8 L8.2 8.6 Z" fill="#a9cdf6" stroke="#4862a8" stroke-width="0.9"/></g>
<text x="28.0" y="486.85" font-size="10.6" fill="#111" font-weight="bold" textLength="97.5" lengthAdjust="spacingAndGlyphs" font-family='"Liberation Sans",sans-serif' >Interrupt Blink LED</text>
<text x="131.4" y="486.85" font-size="10.6" fill="#111" font-weight="bold" textLength="84.1" lengthAdjust="spacingAndGlyphs" font-family='"Liberation Sans",sans-serif' >[Active - Debug]</text>
<path d="M6.5 498.02 l3 3 l3 -3" fill="none" stroke="#555" stroke-width="1.2"/>
<g transform="translate(16,494.02)"><path d="M0.6 2.8 V8.5" stroke="#b39a70" stroke-width="1"/><path d="M3 0.3 h6 v3 h-6 z" fill="#d7dce6"/><path d="M3.4 1 h1.4 M5.4 1 h1.4 M7.4 1 h1.2 M3.4 2.6 h1.4 M5.4 2.6 h1.4 M7.4 2.6 h1.2" stroke="#5a6478" stroke-width="0.9"/><path d="M0.8 8.6 L2.6 5.2 H9.8 L8.2 8.6 Z" fill="#a9cdf6" stroke="#4862a8" stroke-width="0.9"/></g>
<text x="28.0" y="503.62" font-size="10.6" fill="#222" textLength="127.6" lengthAdjust="spacingAndGlyphs" font-family='"Liberation Sans",sans-serif'  stroke="#222" stroke-width="0.22">OutOfBox_MSP430FR5994</text>
<path d="M19.5 513.5899999999999 l2.8 2.6 l-2.8 2.6" fill="none" stroke="#8e8e8e" stroke-width="1.1"/>
<g transform="translate(27,512.29)"><path d="M0.5 1.5 Q0.5 0.5 1.5 0.5 H3.5 L4.5 1.5 H8 V6.5 H0.5 Z" fill="#f0d9a0" stroke="#b89448" stroke-width="0.8"/><path d="M1 7 L2.5 3.2 H9.8 L8.3 7 Z" fill="#f8e6b0" stroke="#b89448" stroke-width="0.8"/></g>
<text x="39.199999999999996" y="520.39" font-size="10.6" fill="#222" textLength="43.300000000000004" lengthAdjust="spacingAndGlyphs" font-family='"Liberation Sans",sans-serif'  stroke="#222" stroke-width="0.22">.launches</text>
<path d="M19.5 530.3599999999999 l2.8 2.6 l-2.8 2.6" fill="none" stroke="#8e8e8e" stroke-width="1.1"/>
<g transform="translate(27,529.06)"><path d="M0.5 1.5 Q0.5 0.5 1.5 0.5 H3.5 L4.5 1.5 H8 V6.5 H0.5 Z" fill="#f0d9a0" stroke="#b89448" stroke-width="0.8"/><path d="M1 7 L2.5 3.2 H9.8 L8.3 7 Z" fill="#f8e6b0" stroke="#b89448" stroke-width="0.8"/></g>
<text x="39.199999999999996" y="537.16" font-size="10.6" fill="#222" textLength="40.300000000000004" lengthAdjust="spacingAndGlyphs" font-family='"Liberation Sans",sans-serif'  stroke="#222" stroke-width="0.22">.settings</text>
<path d="M19.5 547.13 l2.8 2.6 l-2.8 2.6" fill="none" stroke="#8e8e8e" stroke-width="1.1"/>
<g transform="translate(27,545.83)"><path d="M0.5 1.5 Q0.5 0.5 1.5 0.5 H3.5 L4.5 1.5 H8 V6.5 H0.5 Z" fill="#f0d9a0" stroke="#b89448" stroke-width="0.8"/><path d="M1 7 L2.5 3.2 H9.8 L8.3 7 Z" fill="#f8e6b0" stroke="#b89448" stroke-width="0.8"/></g>
<text x="39.199999999999996" y="553.93" font-size="10.6" fill="#222" textLength="32.9" lengthAdjust="spacingAndGlyphs" font-family='"Liberation Sans",sans-serif'  stroke="#222" stroke-width="0.22">Debug</text>
<path d="M19.5 563.9 l2.8 2.6 l-2.8 2.6" fill="none" stroke="#8e8e8e" stroke-width="1.1"/>
<g transform="translate(27,562.6)"><path d="M0.5 1.5 Q0.5 0.5 1.5 0.5 H3.5 L4.5 1.5 H8 V6.5 H0.5 Z" fill="#f0d9a0" stroke="#b89448" stroke-width="0.8"/><path d="M1 7 L2.5 3.2 H9.8 L8.3 7 Z" fill="#f8e6b0" stroke="#b89448" stroke-width="0.8"/></g>
<text x="39.199999999999996" y="570.7" font-size="10.6" fill="#222" textLength="39.1" lengthAdjust="spacingAndGlyphs" font-family='"Liberation Sans",sans-serif'  stroke="#222" stroke-width="0.22">driverlib</text>
<path d="M19.5 580.67 l2.8 2.6 l-2.8 2.6" fill="none" stroke="#8e8e8e" stroke-width="1.1"/>
<g transform="translate(27,579.37)"><path d="M0.5 1.5 Q0.5 0.5 1.5 0.5 H3.5 L4.5 1.5 H8 V6.5 H0.5 Z" fill="#f0d9a0" stroke="#b89448" stroke-width="0.8"/><path d="M1 7 L2.5 3.2 H9.8 L8.3 7 Z" fill="#f8e6b0" stroke="#b89448" stroke-width="0.8"/></g>
<text x="39.199999999999996" y="587.47" font-size="10.6" fill="#222" textLength="24.6" lengthAdjust="spacingAndGlyphs" font-family='"Liberation Sans",sans-serif'  stroke="#222" stroke-width="0.22">FatFs</text>
<path d="M19.5 597.4399999999999 l2.8 2.6 l-2.8 2.6" fill="none" stroke="#8e8e8e" stroke-width="1.1"/>
<g transform="translate(27,596.14)"><path d="M0.5 1.5 Q0.5 0.5 1.5 0.5 H3.5 L4.5 1.5 H8 V6.5 H0.5 Z" fill="#f0d9a0" stroke="#b89448" stroke-width="0.8"/><path d="M1 7 L2.5 3.2 H9.8 L8.3 7 Z" fill="#f8e6b0" stroke="#b89448" stroke-width="0.8"/></g>
<text x="39.199999999999996" y="604.24" font-size="10.6" fill="#222" textLength="20.3" lengthAdjust="spacingAndGlyphs" font-family='"Liberation Sans",sans-serif'  stroke="#222" stroke-width="0.22">HAL</text>
<path d="M18.5 615.41 l3 3 l3 -3" fill="none" stroke="#555" stroke-width="1.2"/>
<g transform="translate(27,612.91)"><path d="M0.5 1.5 Q0.5 0.5 1.5 0.5 H3.5 L4.5 1.5 H8 V6.5 H0.5 Z" fill="#f0d9a0" stroke="#b89448" stroke-width="0.8"/><path d="M1 7 L2.5 3.2 H9.8 L8.3 7 Z" fill="#f8e6b0" stroke="#b89448" stroke-width="0.8"/></g>
<text x="39.199999999999996" y="621.01" font-size="10.6" fill="#222" textLength="50.300000000000004" lengthAdjust="spacingAndGlyphs" font-family='"Liberation Sans",sans-serif'  stroke="#222" stroke-width="0.22">SDCardLib</text>
<g transform="translate(39.8,628.1800000000001)"><path d="M0.5 0.5 H5.5 L7.5 2.5 V9.5 H0.5 Z" fill="#eef3fa" stroke="#8aa0c0"/><text x="1.6" y="8" font-size="6" font-weight="bold" fill="#3a5f9c" font-family="Liberation Sans">c</text></g>
<text x="50.199999999999996" y="637.78" font-size="10.6" fill="#222" textLength="40.6" lengthAdjust="spacingAndGlyphs" font-family='"Liberation Sans",sans-serif'  stroke="#222" stroke-width="0.22">sdcard.c</text>
<g transform="translate(39.8,644.95)"><path d="M0.5 0.5 H5.5 L7.5 2.5 V9.5 H0.5 Z" fill="#eef3fa" stroke="#8aa0c0"/><text x="1.6" y="8" font-size="6" font-weight="bold" fill="#3a5f9c" font-family="Liberation Sans">c</text></g>
<text x="50.199999999999996" y="654.55" font-size="10.6" fill="#222" textLength="41.300000000000004" lengthAdjust="spacingAndGlyphs" font-family='"Liberation Sans",sans-serif'  stroke="#222" stroke-width="0.22">sdcard.h</text>
<path d="M19.5 664.52 l2.8 2.6 l-2.8 2.6" fill="none" stroke="#8e8e8e" stroke-width="1.1"/>
<g transform="translate(27,663.22)"><path d="M0.5 1.5 Q0.5 0.5 1.5 0.5 H3.5 L4.5 1.5 H8 V6.5 H0.5 Z" fill="#f0d9a0" stroke="#b89448" stroke-width="0.8"/><path d="M1 7 L2.5 3.2 H9.8 L8.3 7 Z" fill="#f8e6b0" stroke="#b89448" stroke-width="0.8"/></g>
<text x="39.199999999999996" y="671.32" font-size="10.6" fill="#222" textLength="65.19999999999999" lengthAdjust="spacingAndGlyphs" font-family='"Liberation Sans",sans-serif'  stroke="#222" stroke-width="0.22">targetConfigs</text>
<g transform="translate(28,678.49)"><path d="M0.5 0.5 H5.5 L7.5 2.5 V9.5 H0.5 Z" fill="#eef1f6" stroke="#a9b6cc"/><path d="M2 4 H6 M2 6 H6 M2 8 H6" stroke="#a9b6cc" stroke-width="0.7"/></g>
<text x="39.199999999999996" y="688.09" font-size="10.6" fill="#222" textLength="50.300000000000004" lengthAdjust="spacingAndGlyphs" font-family='"Liberation Sans",sans-serif'  stroke="#222" stroke-width="0.22">.ccsproject</text>
<g transform="translate(28,695.26)"><path d="M0.5 0.5 H5.5 L7.5 2.5 V9.5 H0.5 Z" fill="#eef1f6" stroke="#a9b6cc"/><path d="M2 4 H6 M2 6 H6 M2 8 H6" stroke="#a9b6cc" stroke-width="0.7"/></g>
<text x="39.199999999999996" y="704.86" font-size="10.6" fill="#222" textLength="41.1" lengthAdjust="spacingAndGlyphs" font-family='"Liberation Sans",sans-serif'  stroke="#222" stroke-width="0.22">.cproject</text>
</g>
<rect x="289.5" y="453.5" width="284.0" height="243.5" fill="#ffffff" />
<rect x="289.5" y="453.5" width="284.0" height="20" fill="#f5f5f5" />
<line x1="289.5" y1="473.0" x2="573.5" y2="473.0" stroke="#ededed" stroke-width="1" />
<rect x="289.0" y="453.0" width="285.0" height="244.5" fill="none" stroke="#e3e3e3" stroke-width="1" />
<rect x="289.5" y="453.5" width="68" height="20" fill="#ffffff" />
<g transform="translate(293,459)"><rect x="0.6" y="0.6" width="7.5" height="6.3" rx="1.5" fill="#e2ecf8" stroke="#46598e" stroke-width="1.2"/><rect x="1.8" y="7.2" width="5" height="1.4" fill="#46598e"/><path d="M3 3 h2 l1 1" stroke="#8898c0" stroke-width="0.6" fill="none"/></g>
<text x="303.4" y="469.0" font-size="10.6" fill="#333" textLength="39.1" lengthAdjust="spacingAndGlyphs" font-family='"Liberation Sans",sans-serif'  stroke="#333" stroke-width="0.22">Console</text>
<g transform="translate(347.2,461)" fill="none" stroke="#8c8c8c" stroke-width="0.9"><path d="M1.5 1.5 L5 5 M5 1.5 L1.5 5"/><path d="M0.5 2 V0.5 H2 M4.5 0.5 H6 V2 M6 4.5 V6 H4.5 M2 6 H0.5 V4.5" stroke="#a0a0a0" stroke-width="0.8"/></g>
<g transform="translate(428,457)"><path d="M0.5 0.5 H5 L7 2.5 V9.5 H0.5 Z" fill="#e6e9ee" stroke="#9aa5b8"/><path d="M5 6 L9 10 M9 6 L5 10" stroke="#555" stroke-width="1.1"/></g>
<g transform="translate(442,457)"><rect x="3.5" y="0.5" width="6" height="8.5" fill="#f0f2f6" stroke="#8a9ab8" stroke-width="0.8"/><path d="M5 3 H8 M5 5 H8" stroke="#6a7a98" stroke-width="0.7"/><rect x="0.3" y="5" width="4.5" height="4" fill="#e8b04a"/><path d="M1.2 5 V3.5 A1.3 1.3 0 0 1 3.8 3.5 V5" fill="none" stroke="#b08030" stroke-width="0.8"/></g>
<g transform="translate(456,457)"><rect x="0.5" y="0.5" width="8" height="9" fill="#eeeeee" stroke="#c4c4c4"/><path d="M3 5 L8 2" stroke="#d8c48a" stroke-width="1.5"/></g>
<line x1="468.5" y1="457" x2="468.5" y2="468" stroke="#c8c8c8" stroke-width="1" />
<g transform="translate(475,457)"><rect x="0.5" y="2.5" width="8.5" height="6.5" fill="#eef3f8" stroke="#6a7a94"/><rect x="0.5" y="2.5" width="8.5" height="1.5" fill="#4a70a8"/><path d="M5 4 L9 0.8" stroke="#2c9c50" stroke-width="1.6"/></g>
<g transform="translate(489,457)"><rect x="0.6" y="0.6" width="7.5" height="6.3" rx="1.5" fill="#e2ecf8" stroke="#46598e" stroke-width="1.2"/><rect x="1.8" y="7.2" width="5" height="1.4" fill="#46598e"/><path d="M3 3 h2 l1 1" stroke="#8898c0" stroke-width="0.6" fill="none"/></g>
<path d="M504 459.5 h7 l-3.5 3.8 z" fill="#000"/>
<g transform="translate(517,457)"><rect x="0.5" y="1.5" width="8" height="7.5" fill="#f6f8f0" stroke="#7a8494"/><rect x="0.5" y="1.5" width="8" height="1.6" fill="#5a84c0"/><circle cx="8" cy="1.8" r="1.7" fill="#f0cf60"/></g>
<path d="M533 459.5 h7 l-3.5 3.8 z" fill="#000"/>
<rect x="547.5" y="458.5" width="6.5" height="3" fill="#c9c9c9" stroke="#b0b0b0" stroke-width="0.8" rx="1.5"/>
<rect x="561.0" y="458.5" width="6" height="5.8" fill="#fff" stroke="#858585" stroke-width="1" />
<rect x="561.0" y="458.5" width="6" height="1.5" fill="#858585" />
<text x="290.4" y="486.2" font-size="10.6" fill="#333" textLength="88.1" lengthAdjust="spacingAndGlyphs" font-family='"Liberation Sans",sans-serif'  stroke="#333" stroke-width="0.22">Interrupt Blink LED</text>
<line x1="290" y1="489.5" x2="573" y2="489.5" stroke="#c4c4c4" stroke-width="1" />
<text x="291.5" y="500.8" font-size="11.7" fill="#111" textLength="264" lengthAdjust="spacingAndGlyphs" font-family='"Liberation Mono",monospace' stroke="#111" stroke-width="0.25">MSP430:  Flash/FRAM usage is 3112 bytes.</text>
<rect x="560" y="490" width="13.5" height="193" fill="#f0f0f0" />
<path d="M563.5 501.5 L567 498 L570.5 501.5" fill="none" stroke="#c6c6c6" stroke-width="1.3"/>
<path d="M563.5 673 L567 676.5 L570.5 673" fill="none" stroke="#c6c6c6" stroke-width="1.3"/>
<rect x="290" y="683" width="270" height="14" fill="#f0f0f0" />
<path d="M299 686.5 L295.5 690 L299 693.5" fill="none" stroke="#333" stroke-width="1.4"/>
<rect x="306" y="683.3" width="148.3" height="13.4" fill="#c8c8c8" />
<path d="M548.5 686.5 L552 690 L548.5 693.5" fill="none" stroke="#333" stroke-width="1.4"/>
<rect x="560" y="683" width="13.5" height="14" fill="#f0f0f0" />
<rect x="578" y="453.5" width="379" height="243.5" fill="#ffffff" />
<rect x="578" y="453.5" width="379" height="20" fill="#e9eef6" />
<line x1="578" y1="473.0" x2="957" y2="473.0" stroke="#ededed" stroke-width="1" />
<rect x="577.5" y="453.0" width="380" height="244.5" fill="none" stroke="#e3e3e3" stroke-width="1" />
<rect x="690.8" y="453.5" width="67.7" height="20" fill="#ffffff" />
<g transform="translate(580.5,458)"><rect x="0.5" y="0.5" width="7.5" height="8.5" fill="#eef0f4" stroke="#8a94a8" stroke-width="0.8"/><circle cx="3.5" cy="2.8" r="1.8" fill="#c8303a"/><path d="M1.2 8.5 Q3.5 4.5 6 8.5 Z" fill="#e0b040"/></g>
<text x="591.3" y="468.9" font-size="10.6" fill="#333" textLength="45.5" lengthAdjust="spacingAndGlyphs" font-family='"Liberation Sans",sans-serif'  stroke="#333" stroke-width="0.22">Problems</text>
<g transform="translate(644.5,458.5)"><circle cx="3.5" cy="3.5" r="3.2" fill="#f8eeb0" stroke="#ead88a" stroke-width="0.8"/><circle cx="3.5" cy="3.3" r="1.6" fill="#fff8d8"/><path d="M2.5 7 h2 v2.5 h-2 z" fill="#6a6a6a"/></g>
<text x="653.8" y="468.9" font-size="10.6" fill="#333" textLength="32.3" lengthAdjust="spacingAndGlyphs" font-family='"Liberation Sans",sans-serif'  stroke="#333" stroke-width="0.22">Advice</text>
<g transform="translate(693,458.5)"><rect x="4" y="0.5" width="5.5" height="5" fill="#1c3c98" stroke="#8aa0c8" stroke-width="0.8"/><path d="M0.8 8.5 L4.5 5.5" stroke="#4a4a4a" stroke-width="1.8"/><path d="M0.5 6.5 L3 9" stroke="#7a7a6a" stroke-width="1"/></g>
<text x="703.8" y="468.9" font-size="10.6" fill="#333" textLength="39.7" lengthAdjust="spacingAndGlyphs" font-family='"Liberation Sans",sans-serif'  stroke="#333" stroke-width="0.22">Terminal</text>
<g transform="translate(748,461)" fill="none" stroke="#8c8c8c" stroke-width="0.9"><path d="M1.5 1.5 L5 5 M5 1.5 L1.5 5"/><path d="M0.5 2 V0.5 H2 M4.5 0.5 H6 V2 M6 4.5 V6 H4.5 M2 6 H0.5 V4.5" stroke="#a0a0a0" stroke-width="0.8"/></g>
<g transform="translate(810.5,457)"><rect x="0.6" y="0.6" width="7.5" height="6.3" rx="1.5" fill="#e2ecf8" stroke="#46598e" stroke-width="1.2"/><rect x="1.8" y="7.2" width="5" height="1.4" fill="#46598e"/><path d="M3 3 h2 l1 1" stroke="#8898c0" stroke-width="0.6" fill="none"/></g>
<g transform="translate(824,457)"><path d="M1 9 L4 2 L7 8 L9 1" fill="none" stroke="#c03040" stroke-width="1.3"/><circle cx="1.5" cy="8.5" r="1.5" fill="#c03040"/><circle cx="8.5" cy="1.5" r="1.5" fill="#c03040"/></g>
<line x1="836.5" y1="457" x2="836.5" y2="468" stroke="#b8b8b8" stroke-width="1" />
<g transform="translate(841,457)"><rect x="0.5" y="0.5" width="4" height="9" fill="#e4e4e4" stroke="#b8b8b8"/><rect x="5.5" y="2.5" width="5" height="7" fill="#e4e4e4" stroke="#c4c4c4"/></g>
<g transform="translate(856,457)"><path d="M0.5 0.5 H5 L7 2.5 V9.5 H0.5 Z" fill="#eceef2" stroke="#a9b0bc"/><path d="M5 6 L9 10 M9 6 L5 10" stroke="#555" stroke-width="1.1"/></g>
<g transform="translate(869.5,457)"><rect x="3.5" y="0.5" width="6" height="8.5" fill="#f0f2f6" stroke="#8a9ab8" stroke-width="0.8"/><path d="M5 3 H8 M5 5 H8" stroke="#6a7a98" stroke-width="0.7"/><rect x="0.3" y="5" width="4.5" height="4" fill="#e8b04a"/><path d="M1.2 5 V3.5 A1.3 1.3 0 0 1 3.8 3.5 V5" fill="none" stroke="#b08030" stroke-width="0.8"/></g>
<line x1="882.5" y1="457" x2="882.5" y2="468" stroke="#b8b8b8" stroke-width="1" />
<g transform="translate(888,457)"><rect x="0.5" y="0.5" width="6" height="7" fill="#ececec" stroke="#cccccc"/><rect x="2.5" y="2.5" width="6" height="7" fill="#ececec" stroke="#cccccc"/></g>
<g transform="translate(902,457)"><rect x="0.5" y="1.5" width="8" height="8.5" fill="#f2e2b8" stroke="#a89870"/><rect x="3" y="4" width="4" height="5" fill="#fff" stroke="#b0b0b0" stroke-width="0.6"/></g>
<g transform="translate(916,457)"><circle cx="6.5" cy="3" r="2.6" fill="#e8e0a0" stroke="#4a6aa0" stroke-width="0.9"/><path d="M5 3 H8" stroke="#2c7a50" stroke-width="1"/><circle cx="3" cy="7" r="2.4" fill="#7a8a7a"/><path d="M1.5 9 L6 4" stroke="#2f5f3f" stroke-width="1.2"/></g>
<rect x="931.0" y="458.5" width="6.5" height="3" fill="#c9c9c9" stroke="#b0b0b0" stroke-width="0.8" rx="1.5"/>
<rect x="945.0" y="458.5" width="6" height="5.8" fill="#fff" stroke="#858585" stroke-width="1" />
<rect x="945.0" y="458.5" width="6" height="1.5" fill="#858585" />
<rect x="578.5" y="474" width="378.5" height="17" fill="#ffffff" />
<line x1="578.5" y1="490.5" x2="957" y2="490.5" stroke="#c8c8c8" stroke-width="1" />
<rect x="578.5" y="473.5" width="60" height="17" fill="#ffffff" stroke="#d0d0d0" stroke-width="1" />
<g transform="translate(581.5,478)"><rect x="0.6" y="0.6" width="7.5" height="6.3" rx="1.5" fill="#e2ecf8" stroke="#46598e" stroke-width="1.2"/><rect x="1.8" y="7.2" width="5" height="1.4" fill="#46598e"/><path d="M3 3 h2 l1 1" stroke="#8898c0" stroke-width="0.6" fill="none"/></g>
<text x="591.9" y="488.1" font-size="10.6" fill="#222" textLength="31.6" lengthAdjust="spacingAndGlyphs" font-family='"Liberation Sans",sans-serif'  stroke="#222" stroke-width="0.22">COM6</text>
<g transform="translate(628,480)" fill="none" stroke="#8c8c8c" stroke-width="0.9"><path d="M1.5 1.5 L5 5 M5 1.5 L1.5 5"/><path d="M0.5 2 V0.5 H2 M4.5 0.5 H6 V2 M6 4.5 V6 H4.5 M2 6 H0.5 V4.5" stroke="#a0a0a0" stroke-width="0.8"/></g>
<text x="581.9" y="503.6" font-size="10.6" fill="#333" textLength="37.1" lengthAdjust="spacingAndGlyphs" font-family='"Liberation Sans",sans-serif'  stroke="#333" stroke-width="0.22">Descrip</text>
<rect x="617.5" y="493" width="2.5" height="12" fill="#000" />
<rect x="624.5" y="493" width="1" height="12" fill="#444" />
<rect x="942" y="491" width="15" height="191" fill="#f0f0f0" />
<path d="M946 504 L949.5 500.5 L953 504" fill="none" stroke="#c6c6c6" stroke-width="1.3"/>
<path d="M946 672.5 L949.5 676 L953 672.5" fill="none" stroke="#c6c6c6" stroke-width="1.3"/>
<rect x="578.5" y="682" width="363.5" height="15" fill="#f0f0f0" />
<path d="M589 686 L585.5 689.5 L589 693" fill="none" stroke="#333" stroke-width="1.4"/>
<rect x="595" y="682.3" width="227" height="14.4" fill="#c8c8c8" />
<path d="M930 686 L933.5 689.5 L930 693" fill="none" stroke="#333" stroke-width="1.4"/>
<rect x="942" y="682" width="15" height="15" fill="#f0f0f0" />
<rect x="0" y="698" width="960" height="20" fill="#ebebeb" />
<rect x="0" y="718" width="960" height="2" fill="#1a1a1a" />
<text x="1.4" y="714.35" font-size="10.6" fill="#222" textLength="211.1" lengthAdjust="spacingAndGlyphs" font-family='"Liberation Sans",sans-serif'  stroke="#222" stroke-width="0.22">Connected - Encoding: Default (ISO-8859-1)</text>
<rect x="652.5" y="702" width="1" height="1" fill="#a0a0a0" />
<rect x="652.5" y="704" width="1" height="1" fill="#a0a0a0" />
<rect x="652.5" y="706" width="1" height="1" fill="#a0a0a0" />
<rect x="652.5" y="708" width="1" height="1" fill="#a0a0a0" />
<rect x="652.5" y="710" width="1" height="1" fill="#a0a0a0" />
<rect x="652.5" y="712" width="1" height="1" fill="#a0a0a0" />
<rect x="652.5" y="714" width="1" height="1" fill="#a0a0a0" />
<rect x="914.5" y="702" width="1" height="1" fill="#a0a0a0" />
<rect x="914.5" y="704" width="1" height="1" fill="#a0a0a0" />
<rect x="914.5" y="706" width="1" height="1" fill="#a0a0a0" />
<rect x="914.5" y="708" width="1" height="1" fill="#a0a0a0" />
<rect x="914.5" y="710" width="1" height="1" fill="#a0a0a0" />
<rect x="914.5" y="712" width="1" height="1" fill="#a0a0a0" />
<rect x="914.5" y="714" width="1" height="1" fill="#a0a0a0" />
<rect x="927.5" y="702" width="1" height="1" fill="#a0a0a0" />
<rect x="927.5" y="704" width="1" height="1" fill="#a0a0a0" />
<rect x="927.5" y="706" width="1" height="1" fill="#a0a0a0" />
<rect x="927.5" y="708" width="1" height="1" fill="#a0a0a0" />
<rect x="927.5" y="710" width="1" height="1" fill="#a0a0a0" />
<rect x="927.5" y="712" width="1" height="1" fill="#a0a0a0" />
<rect x="927.5" y="714" width="1" height="1" fill="#a0a0a0" />
</svg>
</body></html>
